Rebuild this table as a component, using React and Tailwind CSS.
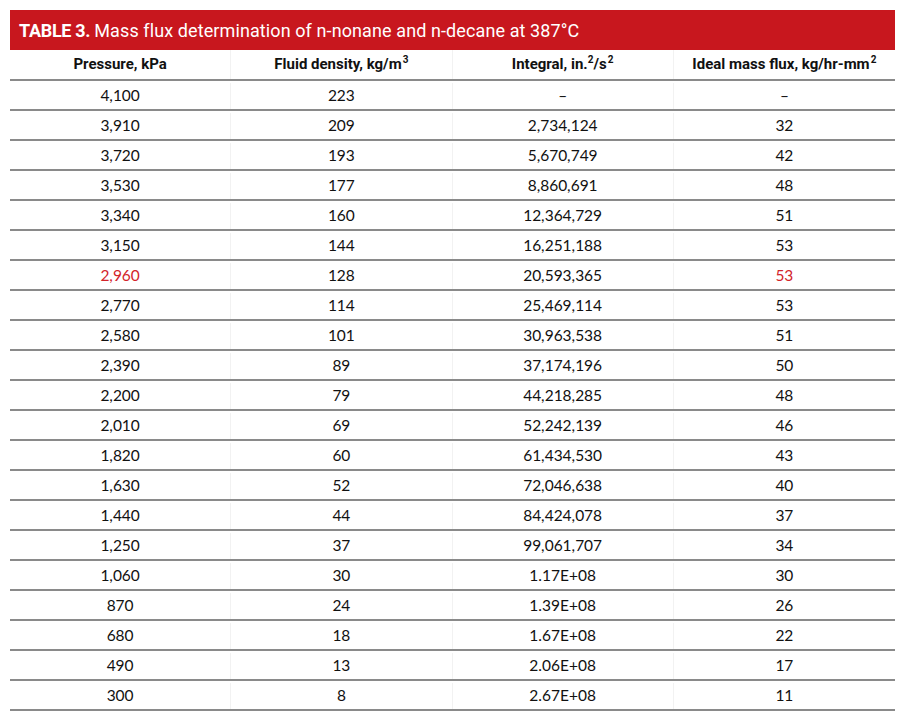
const rows = [
  ["4,100", "223", "–", "–"],
  ["3,910", "209", "2,734,124", "32"],
  ["3,720", "193", "5,670,749", "42"],
  ["3,530", "177", "8,860,691", "48"],
  ["3,340", "160", "12,364,729", "51"],
  ["3,150", "144", "16,251,188", "53"],
  ["2,960", "128", "20,593,365", "53", true],
  ["2,770", "114", "25,469,114", "53"],
  ["2,580", "101", "30,963,538", "51"],
  ["2,390", "89", "37,174,196", "50"],
  ["2,200", "79", "44,218,285", "48"],
  ["2,010", "69", "52,242,139", "46"],
  ["1,820", "60", "61,434,530", "43"],
  ["1,630", "52", "72,046,638", "40"],
  ["1,440", "44", "84,424,078", "37"],
  ["1,250", "37", "99,061,707", "34"],
  ["1,060", "30", "1.17E+08", "30"],
  ["870", "24", "1.39E+08", "26"],
  ["680", "18", "1.67E+08", "22"],
  ["490", "13", "2.06E+08", "17"],
  ["300", "8", "2.67E+08", "11"],
];

const App = () => {
  return (
    <div className="w-[909px] h-[721px] bg-white pt-[10px] pl-[10px] font-['Roboto',sans-serif] text-[#111]">
      {/* Title bar */}
      <div className="w-[885px] h-[40px] bg-[#c8171e] flex items-center pl-[9px] text-white text-[18px]">
        <span className="font-bold tracking-[-0.3px] mr-[4px]">TABLE 3.</span>
        <span className="tracking-[0.1px]">Mass flux determination of n-nonane and n-decane at 387°C</span>
      </div>

      <div className="w-[885px]">
        {/* Column headers */}
        <div className="grid grid-cols-4 h-[31px] border-b-2 border-[#8a8a8a] text-[15px] font-bold">
          <div className="flex items-center justify-center border-r border-[#f2f2f2]">Pressure, kPa</div>
          <div className="flex items-center justify-center border-r border-[#f2f2f2]">
            Fluid density, kg/m<sup className="text-[10px] -top-[5px] ml-[1px]">3</sup>
          </div>
          <div className="flex items-center justify-center border-r border-[#f2f2f2]">
            Integral, in.<sup className="text-[10px] -top-[5px]">2</sup>/s<sup className="text-[10px] -top-[5px] ml-[1px]">2</sup>
          </div>
          <div className="flex items-center justify-center">
            Ideal mass flux, kg/hr-mm<sup className="text-[10px] -top-[5px] ml-[1px]">2</sup>
          </div>
        </div>

        {/* Data rows */}
        {rows.map((r, i) => (
          <div
            key={i}
            className="grid grid-cols-4 h-[30px] pt-[2px] border-b-2 border-[#8a8a8a] text-[15.5px] font-['Lato',sans-serif]"
          >
            <div className={`flex items-center justify-center border-r border-[#f2f2f2] ${r[4] ? "text-[#d3242b]" : ""}`}>
              {r[0]}
            </div>
            <div className="flex items-center justify-center border-r border-[#f2f2f2]">{r[1]}</div>
            <div className="flex items-center justify-center border-r border-[#f2f2f2]">{r[2]}</div>
            <div className={`flex items-center justify-center ${r[4] ? "text-[#d3242b]" : ""}`}>{r[3]}</div>
          </div>
        ))}
      </div>
    </div>
  );
};

export default App;
